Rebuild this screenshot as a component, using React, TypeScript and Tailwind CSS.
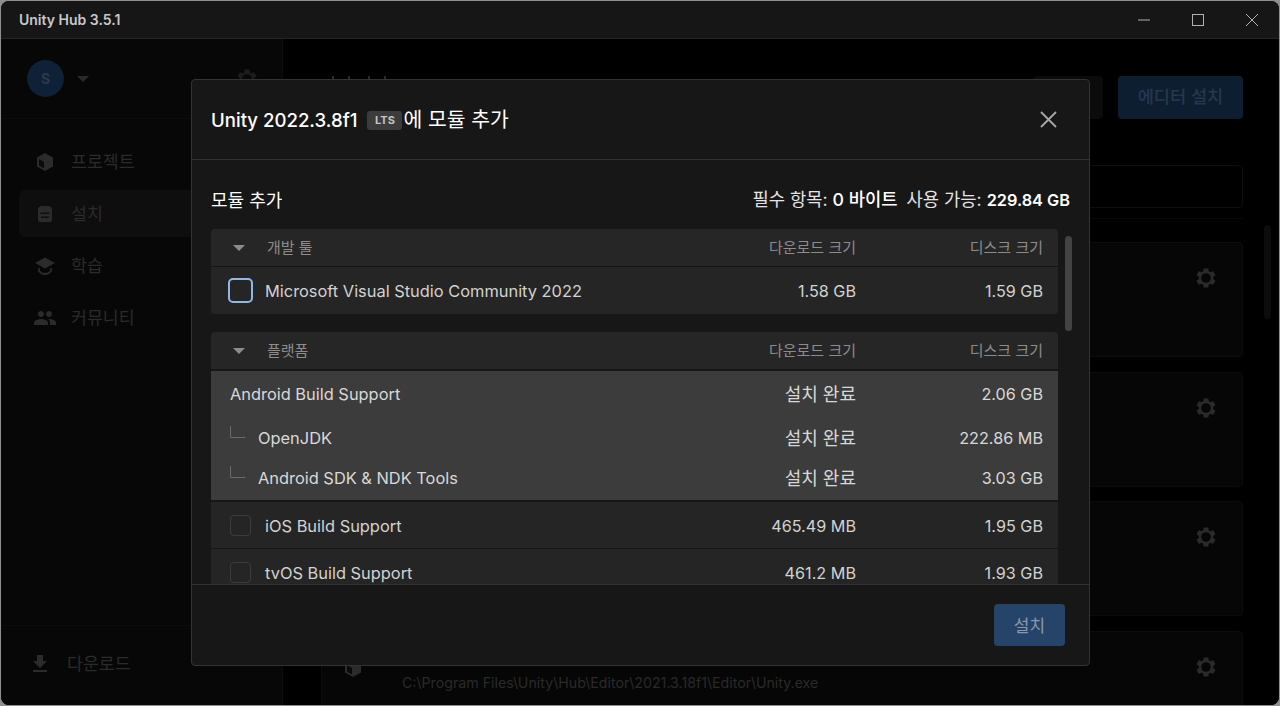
import React from "react"
import { MdPeople, MdFileDownload } from "react-icons/md"

const FONT = "font-['Inter','Noto_Sans_CJK_KR',sans-serif]"
const DIM_TEXT = "text-[#2b2b2b]"

interface ModuleRow {
  name: string
  download: string
  disk: string
}

function Caret({ className }: { className: string }) {
  return (
    <svg width="12" height="6" viewBox="0 0 12 6" className={className}>
      <path d="M0 0h12L6 6z" fill="currentColor" />
    </svg>
  )
}

function GearIcon({ className }: { className: string }) {
  return (
    <svg width="24" height="24" viewBox="0 0 24 24" className={className}>
      <path
        fillRule="evenodd"
        fill="currentColor"
        d="M19.140 12.940c.04-.3.06-.61.06-.94 0-.32-.02-.64-.07-.94l2.030-1.580c.18-.14.23-.41.12-.61l-1.920-3.320c-.12-.22-.37-.29-.59-.22l-2.390.96c-.5-.38-1.030-.7-1.620-.94l-.36-2.540c-.04-.24-.24-.41-.48-.41h-3.840c-.24 0-.43.17-.47.41l-.36 2.540c-.59.24-1.130.57-1.620.94l-2.390-.96c-.22-.08-.47 0-.59.22L2.740 8.870c-.12.21-.08.47.12.61l2.030 1.580c-.05.3-.09.63-.09.94s.02.64.07.94l-2.030 1.580c-.18.14-.23.41-.12.61l1.920 3.320c.12.22.37.29.59.22l2.390-.96c.5.38 1.030.7 1.620.94l.36 2.540c.05.24.24.41.48.41h3.840c.24 0 .44-.17.47-.41l.36-2.540c.59-.24 1.130-.56 1.620-.94l2.390.96c.22.08.47 0 .59-.22l1.920-3.320c.12-.22.07-.47-.12-.61l-2.010-1.580zM12 7.200a4.800 4.800 0 1 0 0 9.600 4.800 4.800 0 0 0 0-9.600z"
      />
    </svg>
  )
}

function CubeIcon() {
  return (
    <svg width="20" height="20" viewBox="0 0 20 20" className="text-[#2b2b2b]">
      <path d="M10 1l8 4.500v9L10 19l-8-4.500v-9z" fill="currentColor" />
      <path d="M4 7l5 3v6.500l-5-3z" fill="#0a0a0a" />
    </svg>
  )
}

function DriveIcon() {
  return (
    <svg width="20" height="20" viewBox="0 0 20 20" className="text-[#2b2b2b]">
      <path d="M7 2h6a4 4 0 0 1 4 4v10a2 2 0 0 1-2 2H5a2 2 0 0 1-2-2V6a4 4 0 0 1 4-4zM5.500 8.500v1.500h9V8.500zM6 12.500v1.500h8v-1.500z" fill="currentColor" fillRule="evenodd" />
    </svg>
  )
}

function CapIcon() {
  return (
    <svg width="22" height="22" viewBox="0 0 22 22" className="text-[#2b2b2b]">
      <path d="M11 2.500L21 8l-10 5.500L1 8z" fill="currentColor" />
      <path d="M5 13v3c1.500 2 3.500 3 6 3s4.500-1 6-3v-3" fill="none" stroke="currentColor" strokeWidth="1.800" />
    </svg>
  )
}

function NavItem({ icon, label, active }: { icon: React.ReactNode; label: string; active?: boolean }) {
  return (
    <div className={`flex h-[47px] items-center rounded-[6px] ${active ? "bg-[#0e0e0e]" : ""}`}>
      <div className="flex w-[52px] justify-center">{icon}</div>
      <span className={`text-[17.300px] ${DIM_TEXT}`}>{label}</span>
    </div>
  )
}

function Sidebar() {
  return (
    <aside className="flex w-[282px] shrink-0 flex-col border-r border-[#0d0d0d] bg-[#070707]">
      <div className="flex h-[80px] shrink-0 items-center border-b border-[#0c0c0c] pl-[26px] pr-[23px]">
        <div className="flex h-[37px] w-[37px] items-center justify-center rounded-full bg-[#0e2136] text-[14px] font-bold text-[#2d3a49]">
          S
        </div>
        <Caret className="ml-[13px] text-[#2a2a2a]" />
        <GearIcon className="ml-auto text-[#1c1c1c]" />
      </div>
      <nav className="flex flex-col gap-[5px] px-[18px] pt-[19px]">
        <NavItem icon={<CubeIcon />} label="프로젝트" />
        <NavItem icon={<DriveIcon />} label="설치" active />
        <NavItem icon={<CapIcon />} label="학습" />
        <NavItem icon={<MdPeople size={24} className="text-[#2b2b2b]" />} label="커뮤니티" />
      </nav>
      <div className="mt-auto flex h-[80px] items-center border-t border-[#0c0c0c] pb-[3px] pl-[27px]">
        <MdFileDownload size={24} className="text-[#2b2b2b]" />
        <span className={`ml-[15px] text-[17.300px] ${DIM_TEXT}`}>다운로드</span>
      </div>
    </aside>
  )
}

function InstallCard({ path }: { path?: string }) {
  return (
    <div className="flex h-[115px] shrink-0 rounded-[4px] border border-[#0c0c0c] bg-[#060606]">
      <div className="flex w-[80px] justify-center pr-[18px] pt-[26px]">
        {path && <CubeIcon />}
      </div>
      <div className="flex-1 pt-[38px]">
        {path && <span className="text-[14.200px] text-[#2a2a2a]">{path}</span>}
      </div>
      <div className="flex w-[72px] justify-center pt-[23px]">
        <GearIcon className="text-[#2a2a2a]" />
      </div>
    </div>
  )
}

function Main() {
  return (
    <main className="flex min-w-0 flex-1 bg-black">
      <div className="flex min-w-0 flex-1 flex-col pl-[38px] pt-[37px]">
        <div className="flex h-[43px] shrink-0">
          {/* 제목은 모달에 가려지고 윗부분만 보임 */}
          <div className="flex items-start gap-[14px] pl-[11px]">
            <i className="h-[3px] w-[2px] bg-[#2b2f33]" />
            <i className="h-[3px] w-[2px] bg-[#2f2c28]" />
            <i className="ml-[4px] h-[3px] w-[2px] bg-[#2b2b2b]" />
            <i className="h-[3px] w-[2px] bg-[#2b2b2b]" />
          </div>
          <div className="ml-auto h-[43px] w-[70px] rounded-[4px] bg-[#0b0b0b]" />
          <div className="ml-[15px] flex h-[43px] w-[125px] items-center justify-center rounded-[4px] bg-[#0e1e31] text-[17.600px] font-medium text-[#25384d]">
            에디터 설치
          </div>
        </div>
        <div className="mt-[46px] flex h-[43px] shrink-0 justify-end">
          <div className="h-full w-[400px] rounded-[4px] border border-[#0e0e0e]" />
        </div>
        <div className="mt-[10px] border-t border-[#0a0a0a] pt-[23px]" />
        <div className="flex min-h-0 flex-1 flex-col gap-[14.700px] overflow-hidden">
          <InstallCard />
          <InstallCard />
          <InstallCard />
          <InstallCard path="C:\Program Files\Unity\Hub\Editor\2021.3.18f1\Editor\Unity.exe" />
        </div>
      </div>
      <div className="w-[36px] shrink-0 pl-[21px] pt-[186px]">
        <div className="h-[94px] w-[7px] rounded-full bg-[#0c0c0c]" />
      </div>
    </main>
  )
}

function GroupHeader({ label }: { label: string }) {
  return (
    <div className="flex h-[38px] shrink-0 items-center rounded-t-[4px] border-b border-[#161616] bg-[#262626] pl-[22px] pr-[15px] pt-[2px] text-[15px] text-[#8c8c8c]">
      <Caret className="-mt-[2px] mr-[22px] text-[#8c8c8c]" />
      <span className="flex-1">{label}</span>
      <span className="w-[140px] text-right">다운로드 크기</span>
      <span className="w-[187px] text-right">디스크 크기</span>
    </div>
  )
}

function ModuleCheckRow({ row, focused, rounded }: { row: ModuleRow; focused?: boolean; rounded?: boolean }) {
  return (
    <div className={`flex h-[47px] shrink-0 items-center border-b border-[#161616] bg-[#252525] pl-[19px] pr-[15px] text-[#d2d2d2] ${rounded ? "rounded-b-[4px] border-b-0" : ""}`}>
      {focused ? (
        <div className="-ml-[2px] h-[25px] w-[25px] rounded-[5px] border-2 border-[#90b8e6]" />
      ) : (
        <div className="h-[21px] w-[21px] rounded-[4px] border border-[#3c3c3c]" />
      )}
      <span className={`flex-1 pt-[2px] text-[16.400px] ${focused ? "ml-[12px]" : "ml-[14px]"}`}>{row.name}</span>
      <span className="w-[140px] pt-[2px] text-right text-[16.200px]">{row.download}</span>
      <span className="w-[187px] pt-[2px] text-right text-[16.200px]">{row.disk}</span>
    </div>
  )
}

function SubMark() {
  return (
    <svg width="15" height="12" viewBox="0 0 15 12" className="absolute left-0 top-[8px] text-[#6a6a6a]">
      <path d="M.5 0v11.500H15" fill="none" stroke="currentColor" />
    </svg>
  )
}

function InstalledRows() {
  return (
    <div className="mt-[1px] shrink-0 border-b-2 border-[#161616] bg-[#3c3c3c] pb-[2px] pl-[19px] pr-[15px] text-[16.400px] text-[#d8d8d8]">
      <div className="flex h-[47px] items-center">
        <span className="flex-1">Android Build Support</span>
        <span className="w-[140px] text-right text-[18px]">설치 완료</span>
        <span className="w-[187px] text-right text-[16.200px]">2.06 GB</span>
      </div>
      <div className="relative flex h-[40px] items-center">
        <SubMark />
        <span className="flex-1 pl-[28px]">OpenJDK</span>
        <span className="w-[140px] text-right text-[18px]">설치 완료</span>
        <span className="w-[187px] text-right text-[16.200px]">222.86 MB</span>
      </div>
      <div className="relative flex h-[40px] items-center">
        <SubMark />
        <span className="flex-1 pl-[28px]">Android SDK &amp; NDK Tools</span>
        <span className="w-[140px] text-right text-[18px]">설치 완료</span>
        <span className="w-[187px] text-right text-[16.200px]">3.03 GB</span>
      </div>
    </div>
  )
}

function AddModuleModal() {
  return (
    <div className="absolute left-[191px] top-[79px] flex h-[587px] w-[899px] flex-col rounded-[4px] border border-[#333] bg-[#171717] text-white">
      <div className="flex h-[80px] shrink-0 items-center border-b border-[#333] pl-[19px] pr-[32px]">
        <span className="pt-[2px] text-[18.600px] font-medium text-white">Unity 2022.3.8f1</span>
        <span className="ml-[10px] mt-[1px] flex h-[19px] w-[35px] items-center justify-center rounded-[3px] bg-[#3c3c3c] text-[11px] font-bold text-[#c4c4c4]">
          LTS
        </span>
        <span className="ml-[1px] pt-[2px] text-[20.400px] text-white">에 모듈 추가</span>
        <svg width="17" height="17" viewBox="0 0 17 17" className="ml-auto text-[#a8a8a8]">
          <path d="M1 1l15 15M16 1L1 16" stroke="currentColor" strokeWidth="1.800" fill="none" />
        </svg>
      </div>
      <div className="flex h-[69px] shrink-0 items-center justify-between pl-[19px] pr-[19px] pt-[12px] text-[#e4e4e4]">
        <span className="text-[18px] text-white">모듈 추가</span>
        <span className="text-[17.700px]">
          필수 항목: <b className="font-medium text-white">0 바이트</b>
          <span className="ml-[9px]">사용 가능: </span>
          <b className="text-[16.300px] font-semibold text-white">229.84 GB</b>
        </span>
      </div>
      <div className="flex min-h-0 flex-1 border-b border-[#333] pl-[19px]">
        <div className="flex w-[847px] shrink-0 flex-col overflow-hidden">
          <GroupHeader label="개발 툴" />
          <ModuleCheckRow row={{ name: "Microsoft Visual Studio Community 2022", download: "1.58 GB", disk: "1.59 GB" }} focused rounded />
          <div className="h-[18px] shrink-0" />
          <GroupHeader label="플랫폼" />
          <InstalledRows />
          <ModuleCheckRow row={{ name: "iOS Build Support", download: "465.49 MB", disk: "1.95 GB" }} />
          <ModuleCheckRow row={{ name: "tvOS Build Support", download: "461.2 MB", disk: "1.93 GB" }} />
        </div>
        <div className="pl-[7px] pt-[7px]">
          <div className="h-[95px] w-[7px] rounded-full bg-[#434343]" />
        </div>
      </div>
      <div className="flex h-[80px] shrink-0 items-center justify-end pb-[1px] pr-[24px]">
        <button className="h-[42px] w-[71px] rounded-[4px] bg-[#264469] pt-[4px] text-[17px] text-[#8c98aa]">설치</button>
      </div>
    </div>
  )
}

export default function App() {
  return (
    <div className={`relative h-[706px] w-[1280px] overflow-hidden bg-[#8f8f8f] p-[1px] ${FONT}`}>
      <div className="flex h-full w-full flex-col overflow-hidden rounded-[8px] bg-black">
        <header className="flex h-[38px] shrink-0 items-center border-b border-[#262626] bg-[#161616]">
          <span className="pl-[18px] text-[14px] font-semibold text-[#c8c8c8]">Unity Hub 3.5.1</span>
          <div className="ml-auto flex items-center text-[#b0b0b0]">
            <div className="flex h-[38px] w-[54px] items-center justify-center">
              <svg width="12" height="2" viewBox="0 0 12 2"><path d="M0 1h12" stroke="currentColor" /></svg>
            </div>
            <div className="flex h-[38px] w-[54px] items-center justify-center">
              <svg width="12" height="12" viewBox="0 0 12 12"><rect x=".5" y=".5" width="11" height="11" fill="none" stroke="currentColor" /></svg>
            </div>
            <div className="flex h-[38px] w-[54px] items-center justify-center">
              <svg width="12" height="12" viewBox="0 0 12 12"><path d="M0 0l12 12M12 0L0 12" stroke="currentColor" fill="none" /></svg>
            </div>
          </div>
        </header>
        <div className="flex min-h-0 flex-1">
          <Sidebar />
          <Main />
        </div>
      </div>
      <AddModuleModal />
    </div>
  )
}
